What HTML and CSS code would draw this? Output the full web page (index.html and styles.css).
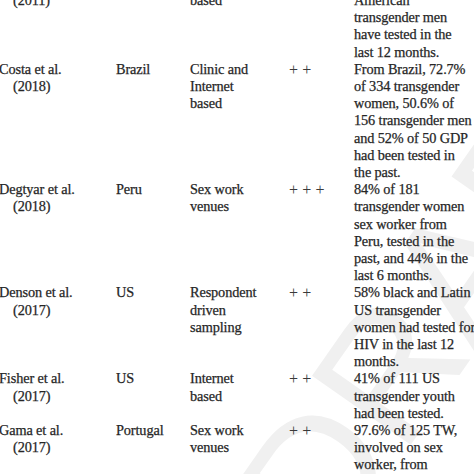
FILE: index.html
```html
<!DOCTYPE html>
<html>
<head>
<meta charset="utf-8">
<link rel="stylesheet" href="styles.css">
</head>
<body>
<div class="page">
  <div class="watermark">DRAFT</div>
  <table class="studies">
    <colgroup>
      <col class="c-author"><col class="c-country"><col class="c-setting"><col class="c-quality"><col class="c-finding">
    </colgroup>
    <tbody>
      <tr>
        <td class="author">Clark et al.<br>(2011)</td>
        <td>US</td>
        <td>Internet<br>based</td>
        <td class="quality">+ +</td>
        <td>49% of 67 African<br>American<br>transgender men<br>have tested in the<br>last 12 months.</td>
      </tr>
      <tr>
        <td class="author">Costa et al.<br>(2018)</td>
        <td>Brazil</td>
        <td>Clinic and<br>Internet<br>based</td>
        <td class="quality">+ +</td>
        <td>From Brazil, 72.7%<br>of 334 transgender<br>women, 50.6% of<br>156 transgender men<br>and 52% of 50 GDP<br>had been tested in<br>the past.</td>
      </tr>
      <tr>
        <td class="author">Degtyar et al.<br>(2018)</td>
        <td>Peru</td>
        <td>Sex work<br>venues</td>
        <td class="quality">+ + +</td>
        <td>84% of 181<br>transgender women<br>sex worker from<br>Peru, tested in the<br>past, and 44% in the<br>last 6 months.</td>
      </tr>
      <tr>
        <td class="author">Denson et al.<br>(2017)</td>
        <td>US</td>
        <td>Respondent<br>driven<br>sampling</td>
        <td class="quality">+ +</td>
        <td>58% black and Latin<br>US transgender<br>women had tested for<br>HIV in the last 12<br>months.</td>
      </tr>
      <tr>
        <td class="author">Fisher et al.<br>(2017)</td>
        <td>US</td>
        <td>Internet<br>based</td>
        <td class="quality">+ +</td>
        <td>41% of 111 US<br>transgender youth<br>had been tested.</td>
      </tr>
      <tr>
        <td class="author">Gama et al.<br>(2017)</td>
        <td>Portugal</td>
        <td>Sex work<br>venues</td>
        <td class="quality">+ +</td>
        <td>97.6% of 125 TW,<br>involved on sex<br>worker, from<br>Portugal, tested in the<br>past.</td>
      </tr>
    </tbody>
  </table>
</div>
</body>
</html>
```
FILE: styles.css
```css
html, body {
  margin: 0;
  padding: 0;
  background: #ffffff;
  overflow: hidden;
}
.page {
  position: relative;
  width: 474px;
  height: 474px;
  overflow: hidden;
}
.studies {
  position: relative;
  z-index: 1;
  border-collapse: collapse;
  table-layout: fixed;
  width: 620px;
  margin-top: -25.3px;
  margin-left: -1px;
  font-family: "Liberation Serif", serif;
  font-size: 14.3px;
  letter-spacing: -0.12px;
  line-height: 17.2px;
  color: #262626;
  -webkit-text-stroke: 0.25px #262626;
}
.c-author { width: 117px; }
.c-country { width: 74px; }
.c-setting { width: 99px; }
.c-quality { width: 65px; }
.c-finding { width: 265px; }
.studies td {
  padding: 0;
  vertical-align: top;
  white-space: nowrap;
}
.studies td.author {
  padding-left: 14px;
  text-indent: -14px;
}
.studies td.quality {
  font-size: 16px;
  word-spacing: 0.5px;
  color: #3a3a3a;
  -webkit-text-stroke: 0;
}
.watermark {
  position: absolute;
  left: 330px;
  top: 412px;
  font-family: "Liberation Sans", sans-serif;
  font-size: 175px;
  line-height: 1;
  color: #f0f0f0;
  white-space: nowrap;
  transform: rotate(-55deg);
  transform-origin: 0 148px;
  z-index: 0;
}
```
